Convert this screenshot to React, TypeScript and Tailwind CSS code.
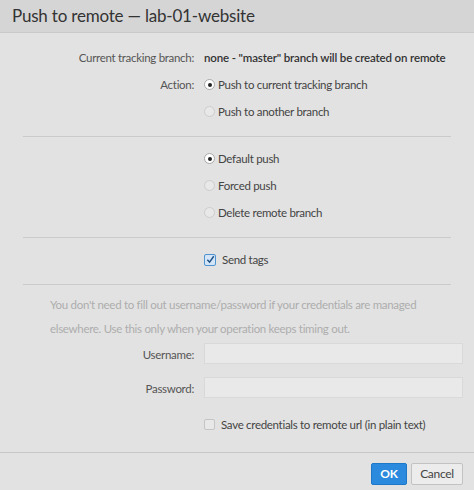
import React from "react";

const font = { fontFamily: "Lato, 'Liberation Sans', sans-serif" };

function Radio({ checked }: { checked?: boolean }) {
  return checked ? (
    <span className="flex size-[11px] shrink-0 items-center justify-center rounded-full border border-[#a8a8a8] bg-white">
      <span className="size-[4px] rounded-full bg-[#222]" />
    </span>
  ) : (
    <span className="size-[11px] shrink-0 rounded-full border border-[#cdcdcd] bg-[#e8e8e8]" />
  );
}

function Checkbox({ checked }: { checked?: boolean }) {
  return checked ? (
    <span className="flex size-[12px] shrink-0 items-center justify-center rounded-[2px] border border-[#4f93d1] bg-[#d3e5f6]">
      <svg viewBox="0 0 10 10" className="size-[9px]" fill="none">
        <path d="M1.5 5.2 L4 8 L8.6 1.4" stroke="#1d4f86" strokeWidth="1.6" />
      </svg>
    </span>
  ) : (
    <span className="size-[11px] shrink-0 rounded-[2px] border border-[#c4c4c4] bg-[#e8e8e8]" />
  );
}

function Row({
  label,
  children,
  className = "h-[27px]",
  labelClassName = "",
}: {
  label?: string;
  children: React.ReactNode;
  className?: string;
  labelClassName?: string;
}) {
  return (
    <div className={`flex items-center ${className}`}>
      <div className={`w-[194px] shrink-0 text-right text-[#555] ${labelClassName}`}>
        {label}
      </div>
      <div className="flex flex-1 items-center whitespace-nowrap pl-[10px] pr-[11px]">
        {children}
      </div>
    </div>
  );
}

function RadioOption({ label, checked }: { label: string; checked?: boolean }) {
  return (
    <Row>
      <label className="flex items-center gap-[3px] text-[#444]">
        <Radio checked={checked} />
        {label}
      </label>
    </Row>
  );
}

const Separator = () => <div className="mx-[23px] h-px bg-[#cbcbcb]" />;

export default function App() {
  return (
    <div
      className="flex h-[490px] w-[474px] flex-col bg-[#e2e2e2] text-[11.5px] tracking-[-0.3px]"
      style={font}
    >
      <header className="flex h-[33px] shrink-0 items-center border-b border-[#c9c9c9] bg-[#d5d5d5] px-[12px]">
        <h1 className="text-[17px] tracking-[-0.2px] text-[#333]">
          Push to remote — lab-01-website
        </h1>
      </header>

      <main className="flex-1 pt-[11px]">
        <Row label="Current tracking branch:">
          <span className="font-semibold tracking-[-0.15px] text-[#333]">
            none - "master" branch will be created on remote
          </span>
        </Row>
        <Row label="Action:">
          <label className="flex items-center gap-[3px] text-[#444]">
            <Radio checked />
            Push to current tracking branch
          </label>
        </Row>
        <RadioOption label="Push to another branch" />

        <div className="mt-[11px]">
          <Separator />
        </div>

        <div className="pt-[8px]">
          <RadioOption label="Default push" checked />
          <RadioOption label="Forced push" />
          <RadioOption label="Delete remote branch" />
        </div>

        <div className="mt-[11px]">
          <Separator />
        </div>

        <div className="pt-[8px]">
          <Row>
            <label className="flex items-center gap-[6px] text-[#444]">
              <Checkbox checked />
              Send tags
            </label>
          </Row>
        </div>

        <div className="mt-[11px]">
          <Separator />
        </div>

        <p className="pl-[50px] pt-[8px] leading-[24px] text-[#adadad]">
          You don't need to fill out username/password if your credentials are managed
          <br />
          elsewhere. Use this only when your operation keeps timing out.
        </p>

        <Row label="Username:" className="mt-[2px] h-[21px]" labelClassName="pt-[3px]">
          <input className="h-[21px] w-full border border-[#d9d9d9] bg-[#e9e9e9] outline-none" />
        </Row>
        <Row label="Password:" className="mt-[13px] h-[21px]" labelClassName="pt-[3px]">
          <input
            type="password"
            className="h-[21px] w-full border border-[#d9d9d9] bg-[#e9e9e9] outline-none"
          />
        </Row>
        <Row className="mt-[13px] h-[27px]">
          <label className="flex items-center gap-[6px] text-[#444]">
            <Checkbox />
            Save credentials to remote url (in plain text)
          </label>
        </Row>
      </main>

      <footer className="flex h-[38px] shrink-0 items-start justify-end gap-[4px] border-t border-[#c6c6c6] pr-[11px] pt-[10px]">
        <button className="h-[22px] w-[36px] rounded-[2px] border border-[#1e78c6] bg-[#2b8ade] text-[12px] font-bold text-white">
          OK
        </button>
        <button className="h-[22px] w-[52px] rounded-[2px] border border-[#c2c2c2] bg-[#ececec] text-[12px] text-[#444]">
          Cancel
        </button>
      </footer>
    </div>
  );
}
